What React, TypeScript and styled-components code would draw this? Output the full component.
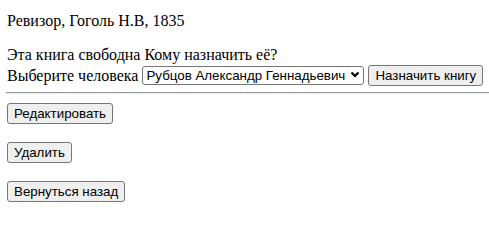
import React from "react";
import styled, { createGlobalStyle } from "styled-components";

const GlobalStyle = createGlobalStyle`
  body {
    margin: 0;
    font-family: "Liberation Serif", "Times New Roman", serif;
    font-size: 16px;
    color: #000;
    background: #fff;
  }
`;

const Page = styled.div`
  padding: 12px 0 8px 7px;
`;

const Title = styled.p`
  margin: 0 0 16px;
  line-height: 18px;
`;

const Assign = styled.div`
  line-height: 18px;
`;

const Row = styled.div`
  display: flex;
  align-items: center;
  gap: 4px;
  margin-top: 1px;
`;

const SelectWrap = styled.div`
  position: relative;
  display: inline-flex;
`;

const Select = styled.select`
  appearance: none;
  font-family: "Liberation Sans", Arial, sans-serif;
  font-size: 13.33px;
  color: #000;
  background: #fff;
  border: 1px solid #767676;
  border-radius: 3px;
  height: 19px;
  width: 222px;
  padding: 0 16px 0 3px;
  line-height: 17px;
`;

const Chevron = styled.svg`
  position: absolute;
  right: 4px;
  top: 5px;
  pointer-events: none;
`;

const Button = styled.button`
  font-family: "Liberation Sans", Arial, sans-serif;
  font-size: 13.33px;
  color: #000;
  background: #efefef;
  border: 1px solid #767676;
  border-radius: 3px;
  height: 21px;
  padding: 0 6px;
  line-height: 19px;
`;

const Rule = styled.hr`
  margin: 6px -8px 8px -1px;
  border: none;
  border-top: 1px solid #9a9a9a;
  border-bottom: 1px solid #eeeeee;
`;

const Actions = styled.div`
  display: flex;
  flex-direction: column;
  align-items: flex-start;
  gap: 18px;
  padding-top: 1px;
`;

export default function App() {
  return (
    <Page>
      <GlobalStyle />
      <Title>Ревизор, Гоголь Н.В, 1835</Title>
      <Assign>
        Эта книга свободна Кому назначить её?
        <Row>
          <span>Выберите человека</span>
          <SelectWrap>
            <Select defaultValue="1">
              <option value="1">Рубцов Александр Геннадьевич</option>
            </Select>
            <Chevron width="10" height="8" viewBox="0 0 10 8">
              <path d="M1.5 1.5l3.5 3.5 3.5-3.5" fill="none" stroke="#000" strokeWidth="2.2" />
            </Chevron>
          </SelectWrap>
          <Button>Назначить книгу</Button>
        </Row>
      </Assign>
      <Rule />
      <Actions>
        <Button>Редактировать</Button>
        <Button>Удалить</Button>
        <Button>Вернуться назад</Button>
      </Actions>
    </Page>
  );
}
